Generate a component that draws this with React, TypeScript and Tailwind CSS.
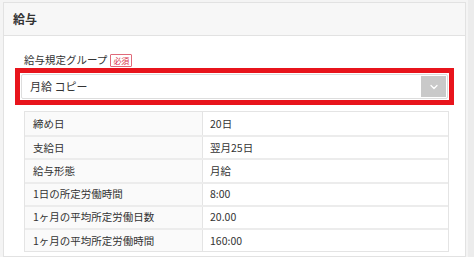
import { ChevronDown } from "lucide-react";

const rows: [string, string][] = [
  ["締め日", "20日"],
  ["支給日", "翌月25日"],
  ["給与形態", "月給"],
  ["1日の所定労働時間", "8:00"],
  ["1ヶ月の平均所定労働日数", "20.00"],
  ["1ヶ月の平均所定労働時間", "160:00"],
];

export default function App() {
  return (
    <div
      className="flex h-[257px] w-[474px] overflow-hidden bg-[#f4f4f4] text-[#333]"
      style={{ fontFamily: '"Noto Sans CJK JP", "Noto Sans", sans-serif' }}
    >
      <div className="ml-[3px] mt-[2px] flex w-[463px] flex-col border border-[#e2e2e2] bg-white">
        <div className="flex h-[33px] items-center border-b border-[#e2e2e2] bg-[#f7f7f7] px-[9px] text-[12px] font-bold">
          給与
        </div>
        <div className="px-[11px] pt-[17px]">
          <div className="flex items-center gap-[3px] pl-[9px] text-[10.5px] leading-[14px]">
            <span>給与規定グループ</span>
            <span className="rounded-[1px] border border-[#e06a7a] px-[2px] text-[8px] leading-[11px] text-[#d9334a]">
              必須
            </span>
          </div>
          <div className="mt-[1px] border-[5px] border-[#e8141c] p-[1px]">
            <div className="flex h-[25px] items-center justify-between rounded-[2px] border border-[#ddd] bg-white pl-[8px] pr-[1px]">
              <span className="text-[11px]">月給 コピー</span>
              <div className="flex h-[21px] w-[25px] items-center justify-center bg-[#c9c9c9]">
                <ChevronDown className="h-[12px] w-[12px] text-white" strokeWidth={2.5} />
              </div>
            </div>
          </div>
          <div className="ml-[9px] mt-[6px] w-[425px] border border-[#e4e4e4]">
            {rows.map(([k, v], i) => (
              <div
                key={k}
                className={
                  "flex h-[23.2px] items-center text-[10.5px] " +
                  (i > 0 ? "border-t-2 border-[#ececec]" : "")
                }
              >
                <div className="flex h-full w-[178px] items-center border-r border-[#e4e4e4] bg-[#fafafa] pl-[8px]">
                  {k}
                </div>
                <div className="pl-[7px]">{v}</div>
              </div>
            ))}
          </div>
        </div>
      </div>
      <div className="ml-[2px] w-[6px] bg-[#ececec]" />
    </div>
  );
}
